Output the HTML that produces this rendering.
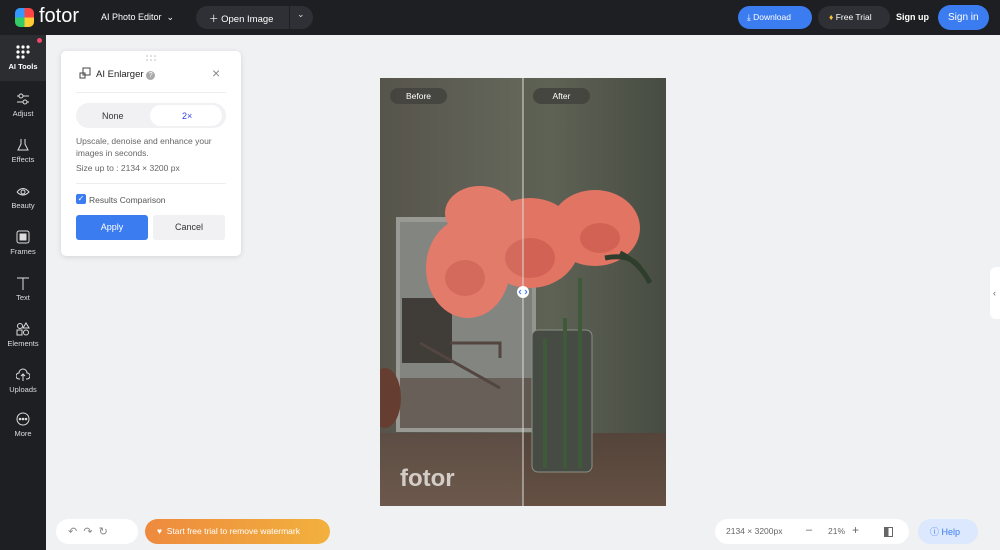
<!DOCTYPE html>
<html><head><style>
*{margin:0;padding:0;box-sizing:border-box}
body{width:1000px;height:550px;overflow:hidden;background:#f0f1f3;font-family:"Liberation Sans",sans-serif;position:relative}
.top{position:absolute;left:0;top:0;width:1000px;height:35px;background:#1e1f23}
.side{position:absolute;left:0;top:35px;width:46px;height:515px;background:#1e1f23}
.si{position:absolute;left:0;width:46px;text-align:center;color:#ddd;font-size:7.5px}
.si svg{display:block;margin:0 auto 3px}
.abs{position:absolute}
.pill{position:absolute;border-radius:14px}
</style></head><body>
<div class="top">
 <div class="abs" style="left:15px;top:8px;width:19px;height:19px;border-radius:5px;background:conic-gradient(#f44 0 25%,#fc3 0 50%,#3c6 0 75%,#39f 0);"></div>
 <div class="abs" style="left:39px;top:5px;color:#fff;font-size:20px;">fotor</div>
 <div class="abs" style="left:101px;top:12px;color:#fff;font-size:9px;">AI Photo Editor &nbsp;⌄</div>
 <div class="pill" style="left:196px;top:6px;width:117px;height:23px;background:#2f3035;"></div>
 <div class="abs" style="left:209px;top:11px;color:#fff;font-size:9.5px;">＋ Open Image</div>
 <div class="abs" style="left:289px;top:6px;width:1px;height:23px;background:#1e1f23"></div>
 <div class="abs" style="left:297px;top:9px;color:#ddd;font-size:9px;">⌄</div>
 <div class="pill" style="left:738px;top:6px;width:74px;height:23px;background:#3b7cf0;"></div>
 <div class="abs" style="left:747px;top:12px;color:#fff;font-size:8.5px;">⤓ Download</div>
 <div class="pill" style="left:818px;top:6px;width:72px;height:23px;background:#2f3035;"></div>
 <div class="abs" style="left:829px;top:12px;color:#fff;font-size:8.5px;"><span style="color:#f6c33a">♦</span> Free Trial</div>
 <div class="abs" style="left:896px;top:12px;color:#fff;font-size:9px;font-weight:bold">Sign up</div>
 <div class="pill" style="left:938px;top:5px;width:51px;height:25px;background:#3b7cf0;"></div>
 <div class="abs" style="left:948px;top:12px;color:#fff;font-size:10px;">Sign in</div>
</div>
<div class="side">
 <div class="abs" style="left:0;top:0;width:46px;height:46px;background:#2c2d31"></div>
 <div class="abs" style="left:37px;top:3px;width:5px;height:5px;border-radius:50%;background:#f4476b"></div>
 <div class="si" style="top:10px;color:#fff;font-weight:bold"><svg width="14" height="14"><g fill="#fff"><circle cx="2" cy="2" r="1.6"/><circle cx="7" cy="2" r="1.6"/><circle cx="12" cy="2" r="1.6"/><circle cx="2" cy="7" r="1.6"/><circle cx="7" cy="7" r="1.6"/><circle cx="12" cy="7" r="1.6"/><circle cx="2" cy="12" r="1.6"/><circle cx="7" cy="12" r="1.6"/></g></svg>AI Tools</div>
 <div class="si" style="top:57px"><svg width="14" height="14" stroke="#ddd" fill="none"><path d="M1 4h12M1 10h12"/><circle cx="5" cy="4" r="2" fill="#1e1f23"/><circle cx="9" cy="10" r="2" fill="#1e1f23"/></svg>Adjust</div>
 <div class="si" style="top:103px"><svg width="14" height="14" stroke="#ddd" fill="none"><path d="M5 1v5L2 12h10L9 6V1"/></svg>Effects</div>
 <div class="si" style="top:149px"><svg width="14" height="14" stroke="#ddd" fill="none"><path d="M1 8q6-7 12 0q-6 6-12 0"/><circle cx="7" cy="8" r="2"/></svg>Beauty</div>
 <div class="si" style="top:195px"><svg width="14" height="14" stroke="#ddd" fill="none"><rect x="1" y="1" width="12" height="12" rx="2"/><rect x="4" y="4" width="6" height="6" fill="#ddd"/></svg>Frames</div>
 <div class="si" style="top:241px"><svg width="14" height="14" stroke="#ddd" fill="none"><path d="M1 2h12M7 2v12"/></svg>Text</div>
 <div class="si" style="top:287px"><svg width="14" height="14" stroke="#ddd" fill="none"><circle cx="4" cy="4" r="2.5"/><path d="M10 1l3 5h-6z"/><rect x="1" y="8" width="5" height="5"/><circle cx="10" cy="10.5" r="2.5"/></svg>Elements</div>
 <div class="si" style="top:333px"><svg width="14" height="14" stroke="#ddd" fill="none"><path d="M4 11H3a3 3 0 010-6 4 4 0 018 0 3 3 0 010 6h-1M7 13V6M5 8l2-2 2 2"/></svg>Uploads</div>
 <div class="si" style="top:377px"><svg width="14" height="14" stroke="#ddd" fill="none"><circle cx="7" cy="7" r="6"/><g fill="#ddd"><circle cx="4" cy="7" r=".8"/><circle cx="7" cy="7" r=".8"/><circle cx="10" cy="7" r=".8"/></g></svg>More</div>
</div>
<!-- panel -->
<div class="abs" style="left:61px;top:51px;width:180px;height:205px;background:#fff;border-radius:5px;box-shadow:0 1px 6px rgba(0,0,0,.12)">
 <svg class="abs" style="left:85px;top:4px" width="10" height="6" fill="#bbb"><circle cx="1" cy="1" r=".8"/><circle cx="5" cy="1" r=".8"/><circle cx="9" cy="1" r=".8"/><circle cx="1" cy="5" r=".8"/><circle cx="5" cy="5" r=".8"/><circle cx="9" cy="5" r=".8"/></svg>
 <svg class="abs" style="left:18px;top:16px" width="12" height="12" stroke="#444" fill="none"><rect x="4" y="1" width="7" height="7"/><rect x="1" y="6" width="5" height="5"/></svg>
 <div class="abs" style="left:35px;top:18px;font-size:9.5px;color:#222">AI Enlarger <span style="display:inline-block;width:9px;height:9px;border-radius:50%;background:#aaa;color:#fff;font-size:7px;text-align:center;line-height:9px">?</span></div>
 <div class="abs" style="left:151px;top:14px;font-size:14px;color:#888">×</div>
 <div class="abs" style="left:15px;top:41px;width:150px;height:1px;background:#eee"></div>
 <div class="abs" style="left:15px;top:52px;width:150px;height:25px;background:#f1f1f3;border-radius:13px"></div>
 <div class="abs" style="left:89px;top:54px;width:72px;height:21px;background:#fff;border-radius:11px"></div>
 <div class="abs" style="left:41px;top:60px;font-size:9px;color:#333">None</div>
 <div class="abs" style="left:121px;top:60px;font-size:9px;color:#2b3ff0">2×</div>
 <div class="abs" style="left:15px;top:84px;font-size:8.5px;line-height:12px;color:#666;width:160px">Upscale, denoise and enhance your images in seconds.</div>
 <div class="abs" style="left:15px;top:112px;font-size:8.5px;color:#666">Size up to : 2134 × 3200 px</div>
 <div class="abs" style="left:15px;top:132px;width:150px;height:1px;background:#eee"></div>
 <div class="abs" style="left:15px;top:143px;width:10px;height:10px;background:#3b7cf0;border-radius:2px;color:#fff;font-size:8px;line-height:10px;text-align:center">✓</div>
 <div class="abs" style="left:28px;top:144px;font-size:8.5px;color:#555">Results Comparison</div>
 <div class="abs" style="left:15px;top:164px;width:72px;height:25px;background:#3b7cf0;border-radius:3px;color:#fff;font-size:9px;text-align:center;line-height:25px">Apply</div>
 <div class="abs" style="left:92px;top:164px;width:72px;height:25px;background:#f1f1f3;border-radius:3px;color:#333;font-size:9px;text-align:center;line-height:25px">Cancel</div>
</div>
<!-- image -->
<svg class="abs" style="left:380px;top:78px" width="286" height="428">
 <defs><linearGradient id="w" x1="0" x2="1"><stop offset="0" stop-color="#4f4c42"/><stop offset=".6" stop-color="#5e6255"/><stop offset="1" stop-color="#474c42"/></linearGradient>
 <linearGradient id="f" x1="0" y1="0" x2="0" y2="1"><stop offset="0" stop-color="#54443a"/><stop offset="1" stop-color="#655043"/></linearGradient></defs>
 <rect width="286" height="428" fill="url(#w)"/>
 <rect y="355" width="286" height="73" fill="url(#f)"/>
 <rect x="16" y="139" width="140" height="215" fill="#959590"/>
 <rect x="20" y="144" width="132" height="206" fill="#7d7f7a"/>
 <rect x="20" y="300" width="132" height="50" fill="#605850"/>
 <rect x="22" y="220" width="50" height="65" fill="#36322e"/>
 <path d="M40 265l80 45M70 265h50v15" stroke="#4a3c35" stroke-width="3" fill="none"/>
 <ellipse cx="5" cy="320" rx="16" ry="30" fill="#5e3426"/>
 <rect x="152" y="252" width="60" height="142" rx="6" fill="#464c43" stroke="#8a9086"/>
 <path d="M165 260v130M185 240v150M200 200v190" stroke="#3e5a38" stroke-width="4"/>
 <g fill="#e27464">
  <ellipse cx="88" cy="190" rx="42" ry="50"/>
  <ellipse cx="150" cy="165" rx="50" ry="45"/>
  <ellipse cx="215" cy="150" rx="45" ry="38"/>
  <ellipse cx="100" cy="135" rx="35" ry="27"/>
 </g>
 <g fill="#c8594a" opacity=".6"><ellipse cx="150" cy="180" rx="25" ry="20"/><ellipse cx="220" cy="160" rx="20" ry="15"/><ellipse cx="85" cy="200" rx="20" ry="18"/></g>
 <path d="M240 175q20 10 30 30M225 180q25-5 35 10" stroke="#2f3e2c" stroke-width="5" fill="none"/>
 <rect x="0" y="0" width="143" height="428" fill="#fff" opacity=".05"/>
 <rect x="142.5" y="0" width="1" height="428" fill="#ddd"/>
 <circle cx="143" cy="214" r="6" fill="#fff"/>
 <path d="M139 214l2-2M139 214l2 2M147 214l-2-2M147 214l-2 2" stroke="#3b7cf0" stroke-width="1"/>
 <rect x="10" y="10" width="57" height="16" rx="8" fill="#44443e" opacity=".9"/>
 <text x="38.5" y="21" fill="#fff" font-size="8.5" text-anchor="middle" font-family="Liberation Sans">Before</text>
 <rect x="153" y="10" width="57" height="16" rx="8" fill="#44443e" opacity=".9"/>
 <text x="181.5" y="21" fill="#fff" font-size="8.5" text-anchor="middle" font-family="Liberation Sans">After</text>
 <text x="20" y="408" fill="#e6e2de" font-size="24" font-weight="bold" font-family="Liberation Sans" opacity=".85">fotor</text>
</svg>
<div class="abs" style="left:990px;top:267px;width:12px;height:52px;background:#fff;border-radius:6px 0 0 6px;color:#666;font-size:9px;line-height:52px;padding-left:3px">‹</div>
<!-- bottom -->
<div class="pill" style="left:56px;top:519px;width:82px;height:25px;background:#fff;border-radius:13px"></div>
<div class="abs" style="left:68px;top:525px;color:#888;font-size:11px">↶ &nbsp;↷ &nbsp;↻</div>
<div class="pill" style="left:145px;top:519px;width:185px;height:25px;background:linear-gradient(90deg,#ee8a3e,#f2b13d);border-radius:13px"></div>
<div class="abs" style="left:157px;top:526px;color:#fff;font-size:8.5px">♥ &nbsp;Start free trial to remove watermark</div>
<div class="pill" style="left:715px;top:519px;width:194px;height:25px;background:#fff;border-radius:13px"></div>
<div class="abs" style="left:726px;top:526px;color:#666;font-size:8.5px">2134 × 3200px</div>
<div class="abs" style="left:806px;top:524px;color:#666;font-size:11px">–</div>
<div class="abs" style="left:828px;top:526px;color:#666;font-size:8.5px">21%</div>
<div class="abs" style="left:852px;top:523px;color:#666;font-size:12px">+</div>
<div class="abs" style="left:884px;top:527px;width:9px;height:10px;border:1.5px solid #666;background:linear-gradient(90deg,#666 50%,#fff 50%)"></div>
<div class="pill" style="left:918px;top:519px;width:60px;height:25px;background:#dce8fd;border-radius:13px"></div>
<div class="abs" style="left:930px;top:525px;color:#3b7cf0;font-size:9px">ⓘ Help</div>
</body></html>
